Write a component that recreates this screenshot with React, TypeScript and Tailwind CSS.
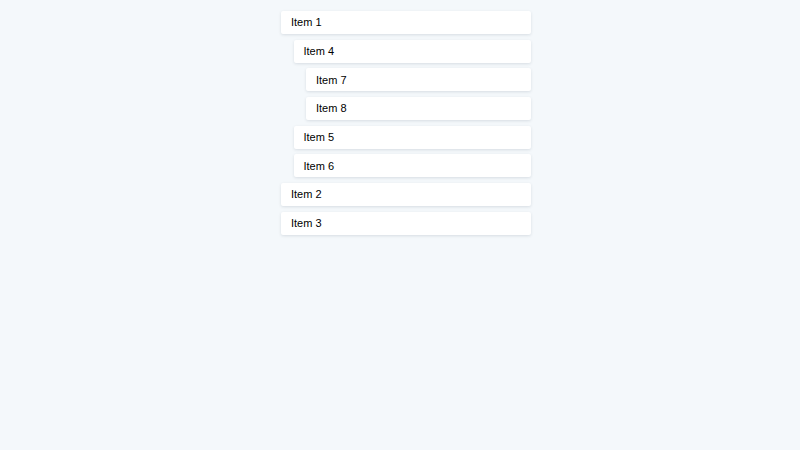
type Node = { id: number; label: string; children?: Node[] };

const tree: Node[] = [
  {
    id: 1,
    label: "Item 1",
    children: [
      {
        id: 4,
        label: "Item 4",
        children: [
          { id: 7, label: "Item 7" },
          { id: 8, label: "Item 8" },
        ],
      },
      { id: 5, label: "Item 5" },
      { id: 6, label: "Item 6" },
    ],
  },
  { id: 2, label: "Item 2" },
  { id: 3, label: "Item 3" },
];

function Branch({ nodes, nested }: { nodes: Node[]; nested?: boolean }) {
  return (
    <ul className={nested ? "flex flex-col gap-[5.7px] pl-[12.5px]" : "flex flex-col gap-[5.7px]"}>
      {nodes.map((node) => (
        <li key={node.id} className="flex flex-col gap-[5.7px]">
          <div className="flex h-[23px] items-center rounded-[2px] bg-white pl-[10px] text-[11px] text-black shadow-[0_1px_3px_rgba(15,30,60,0.12)]">
            {node.label}
          </div>
          {node.children && <Branch nodes={node.children} nested />}
        </li>
      ))}
    </ul>
  );
}

export default function App() {
  return (
    <div className="min-h-[450px] w-full bg-[#f4f8fb] pt-[11px] font-['Liberation_Sans',Arial,sans-serif]">
      <div className="mx-auto w-[262px] pl-[12px]">
        <Branch nodes={tree} />
      </div>
    </div>
  );
}
